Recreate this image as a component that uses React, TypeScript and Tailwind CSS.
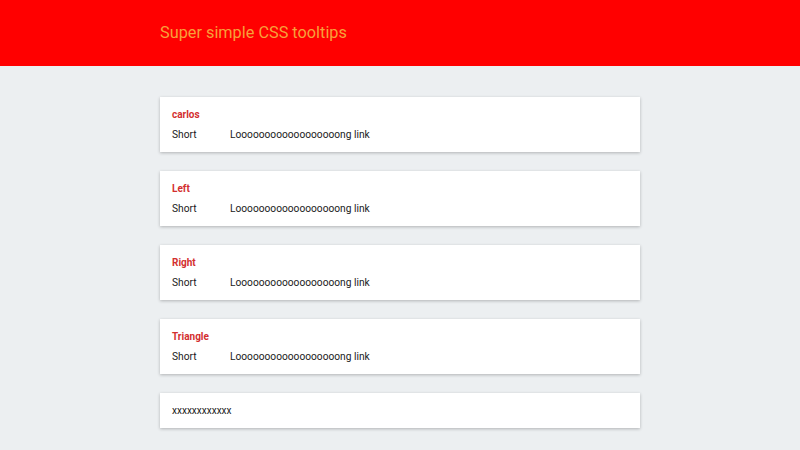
import React from "react";

const sections = ["carlos", "Left", "Right", "Triangle"];
const longLink = "L" + "o".repeat(18) + "ng link";

function Card({ title }: { title: string }) {
  return (
    <div className="bg-white px-3 py-[11px] shadow-[0_1px_3px_rgba(0,0,0,0.25)]">
      <div className="text-[10px] leading-[13px] font-bold text-[#d32f2f]">{title}</div>
      <div className="mt-[7px] flex text-[10.2px] leading-[13px] text-[#1a1a1a]">
        <span className="w-[58px]">Short</span>
        <span>{longLink}</span>
      </div>
    </div>
  );
}

export default function App() {
  return (
    <div className="min-h-[450px] bg-[#eceff1] font-['Roboto',sans-serif]">
      <header className="h-[66px] bg-[#ff0000] flex items-center">
        <div className="mx-auto w-[480px] pt-px">
          <h1 className="text-[16.3px] font-normal text-[#f7a13a]">Super simple CSS tooltips</h1>
        </div>
      </header>
      <main className="mx-auto w-[480px] pt-[31px] pb-6 flex flex-col gap-[19px]">
        {sections.map((s) => (
          <Card key={s} title={s} />
        ))}
        <div className="bg-white px-3 py-[11px] shadow-[0_1px_3px_rgba(0,0,0,0.25)] text-[10px] leading-[13px] text-[#1a1a1a]">
          xxxxxxxxxxxx
        </div>
      </main>
    </div>
  );
}
